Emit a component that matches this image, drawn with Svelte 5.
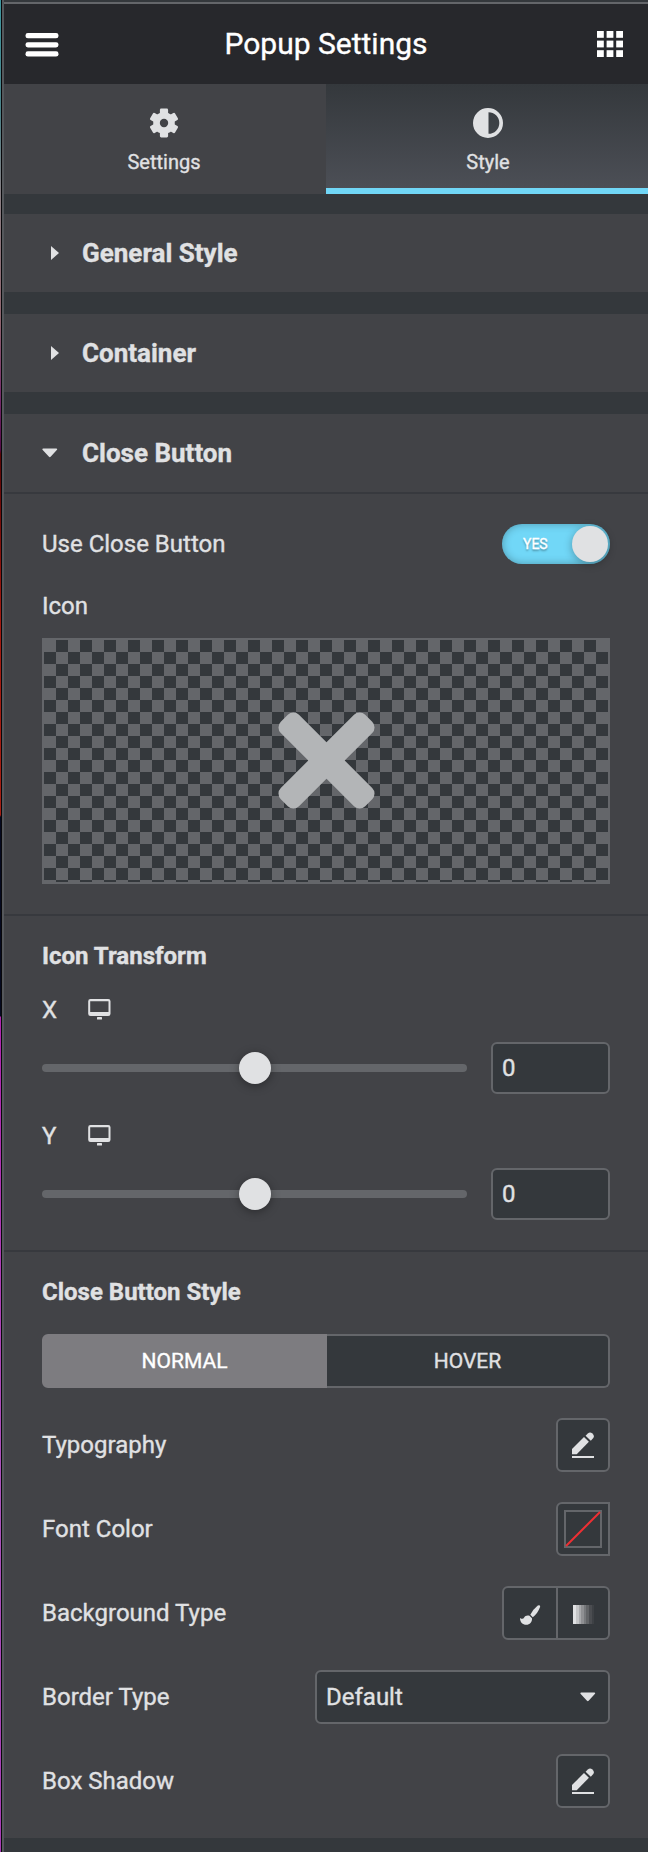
<script lang="ts">
  let activeTab = $state('style');
  let buttonState = $state('normal');
  let useClose = $state(true);

  const axes = [
    { name: 'X', value: 0 },
    { name: 'Y', value: 0 },
  ];
  const bars = [0, 9.2, 18.3];
  const dots = [0, 9.6, 19.2];
  const teeth = [0, 60, 120];

  // slider range is -100..100
  function percent(value: number) {
    return (value + 100) / 2;
  }
</script>

{#snippet pencil()}
  <svg width="22" height="26" viewBox="0 0 22 26" fill="currentColor">
    <path d="M0 17 12 5.1 16.9 9.8 4.7 22.3H0Z" />
    <path d="M13.6 3.8 15.8 1.5Q18 -.4 20.4 1.5 22.9 4 21.3 6L18.8 8.7Z" />
    <path d="M0 24h22v2H0z" />
  </svg>
{/snippet}

{#snippet caretDown()}
  <svg width="16" height="10" viewBox="0 0 16 10" fill="currentColor">
    <path d="M1.3 .6H14.2Q15.9 .8 14.8 2L8.6 8.8Q7.8 9.6 7 8.8L.7 2Q-.3 .8 1.3 .6Z" />
  </svg>
{/snippet}

<div class="frame">
  <div class="page-edge"></div>
  <div class="panel">
    <header>
      <svg width="34" height="24" viewBox="0 0 34 24" fill="currentColor">
        {#each bars as y (y)}
          <rect x=".5" {y} width="33" height="5.3" rx="2.4" />
        {/each}
      </svg>
      <h1>Popup Settings</h1>
      <svg width="26" height="26" viewBox="0 0 26 26" fill="currentColor">
        {#each dots as y (y)}
          {#each dots as x (x)}
            <rect {x} {y} width="6.8" height="6.8" />
          {/each}
        {/each}
      </svg>
    </header>

    <nav>
      <button class="tab" class:active={activeTab === 'settings'} onclick={() => (activeTab = 'settings')}>
        <svg width="30" height="30" viewBox="-15 -15 30 30" fill="currentColor">
          <circle r="10.8" />
          {#each teeth as angle (angle)}
            <rect x="-4.1" y="-14.4" width="8.2" height="28.8" rx="1.3" transform="rotate({angle})" />
          {/each}
          <circle class="hole" r="4.2" />
        </svg>
        <span>Settings</span>
      </button>
      <button class="tab" class:active={activeTab === 'style'} onclick={() => (activeTab = 'style')}>
        <svg width="30" height="30" viewBox="-15 -15 30 30" fill="currentColor">
          <path fill-rule="evenodd" d="M0-15a15 15 0 1 1 0 30a15 15 0 1 1 0-30ZM.5-10.8V10.8a10.8 10.8 0 0 0 0-21.6Z" />
        </svg>
        <span>Style</span>
      </button>
    </nav>

    <section class="closed">
      <h2>
        <svg class="caret-right" width="8" height="14" viewBox="0 0 8 14" fill="currentColor"><path d="M0 0 8 7 0 14Z" /></svg>
        General Style
      </h2>
    </section>
    <section class="closed">
      <h2>
        <svg class="caret-right" width="8" height="14" viewBox="0 0 8 14" fill="currentColor"><path d="M0 0 8 7 0 14Z" /></svg>
        Container
      </h2>
    </section>

    <section class="open">
      <h2>
        {@render caretDown()}
        Close Button
      </h2>

      <div class="group close-group">
        <div class="row toggle-row">
          <span>Use Close Button</span>
          <button class="switch" class:on={useClose} aria-label="Use Close Button" onclick={() => (useClose = !useClose)}>
            <span class="switch-text">YES</span>
            <span class="knob"></span>
          </button>
        </div>
        <div class="icon-label">Icon</div>
        <div class="preview">
          <svg width="97" height="97" viewBox="-49 -49 98 98" fill="currentColor">
            <path
              transform="rotate(45)"
              d="M-13-13V-52.3a8 8 0 0 1 8-8H5a8 8 0 0 1 8 8V-13H52.3a8 8 0 0 1 8 8V5a8 8 0 0 1-8 8H13V52.3a8 8 0 0 1-8 8H-5a8 8 0 0 1-8-8V13H-52.3a8 8 0 0 1-8-8V-5a8 8 0 0 1 8-8Z"
            />
          </svg>
        </div>
      </div>

      <div class="group transform-group">
        <h3>Icon Transform</h3>
        {#each axes as axis (axis.name)}
          <div class="axis">
            <div class="axis-label">
              <span class="axis-name">{axis.name}</span>
              <svg width="23" height="21" viewBox="0 0 23 21" fill="currentColor">
                <path fill-rule="evenodd" d="M2.5 0h17.7q2.3 0 2.3 2.3v12.4q0 2.3-2.3 2.3H2.5Q.2 17 .2 14.7V2.3Q.2 0 2.5 0ZM2.2 2.3V13h18.3V2.3Z" />
                <rect x="9" y="18" width="5" height="2.5" rx=".5" />
              </svg>
            </div>
            <div class="slider-row">
              <div class="track">
                <div class="handle" style="left: {percent(axis.value)}%"></div>
              </div>
              <div class="number">{axis.value}</div>
            </div>
          </div>
        {/each}
      </div>

      <div class="group style-group">
        <h3>Close Button Style</h3>
        <div class="states">
          <button class:selected={buttonState === 'normal'} onclick={() => (buttonState = 'normal')}>NORMAL</button>
          <button class:selected={buttonState === 'hover'} onclick={() => (buttonState = 'hover')}>HOVER</button>
        </div>
        <div class="row">
          <span>Typography</span>
          <div class="box">{@render pencil()}</div>
        </div>
        <div class="row">
          <span>Font Color</span>
          <div class="box color">
            <svg width="38" height="38" viewBox="0 0 38 38" fill="none" stroke-width="2">
              <rect class="swatch" x="1" y="1" width="36" height="36" />
              <path class="slash" d="M2 36 36 2" />
            </svg>
          </div>
        </div>
        <div class="row">
          <span>Background Type</span>
          <div class="choices">
            <div class="choice">
              <svg width="21" height="20" viewBox="0 0 21 20" fill="currentColor">
                <path d="M17.8 .4Q20.4 -.5 20.1 2 17.5 8.8 12.8 12.2L10.3 9.8Q12.6 4.5 17.8 .4Z" />
                <path d="M9.5 10.7 12 13.2C12.3 17.2 9.7 19.7 6.4 19.7 2.5 19.7 0 17 0 12.9 1.7 14.2 3.4 14.2 4 12.8 5 10.6 7.3 9.9 9.5 10.7Z" />
              </svg>
            </div>
            <div class="choice"><div class="gradient"></div></div>
          </div>
        </div>
        <div class="row">
          <span>Border Type</span>
          <div class="select">
            <span>Default</span>
            {@render caretDown()}
          </div>
        </div>
        <div class="row">
          <span>Box Shadow</span>
          <div class="box">{@render pencil()}</div>
        </div>
      </div>
    </section>
  </div>
</div>

<style>
  :global(body) {
    background: #34383c;
  }

  .frame {
    display: flex;
    width: 648px;
    height: 1852px;
    overflow: hidden;
    font-family: Roboto, 'Liberation Sans', sans-serif;
    font-size: 24px;
    color: #e0e1e3;
    -webkit-text-stroke: 0.35px currentColor;
  }

  .frame * {
    box-sizing: border-box;
  }

  .page-edge {
    width: 2px;
    border-right: 1px solid #08080b;
    background: linear-gradient(#3e98a0 0, #4b8389 110px, #8b7f83 200px, #90666f 320px, #74296b 400px, #530b48 450px, #5a0606 454px, #a31b12 620px, #a52014 815px, #050a20 817px, #050a20 1016px, #b025ae 1017px, #ab55bb 1500px, #a73bb4 1852px);
  }

  .panel {
    flex: 1;
    border-left: 2px solid #55585c;
    background: #34383c;
  }

  svg {
    display: block;
    flex-shrink: 0;
  }

  button {
    margin: 0;
    padding: 0;
    border: 0;
    font-family: inherit;
    color: inherit;
    cursor: pointer;
  }

  header {
    display: flex;
    align-items: center;
    justify-content: space-between;
    height: 84px;
    padding: 4px 25px 0 21px;
    background: linear-gradient(#34383c 2px, #64666a 2px, #64666a 4px, #27282c 4px);
    color: #fff;
  }

  header svg:first-child {
    margin-top: 2px;
  }

  h1 {
    margin: 0 4px 2px 0;
    font-size: 30px;
    font-weight: 400;
  }

  nav {
    display: grid;
    grid-template-columns: 1fr 1fr;
    height: 110px;
  }

  .tab {
    display: flex;
    flex-direction: column;
    align-items: center;
    gap: 12px;
    padding: 24px 2px 0 0;
    background: #424347;
    font-size: 20px;
    line-height: 24px;
  }

  .tab.active {
    padding: 24px 0 0 2px;
    border-bottom: 6px solid #71d7f7;
    background: linear-gradient(#34383c, #4c4f56);
  }

  .hole {
    fill: #424347;
  }

  section {
    background: #424347;
  }

  .closed {
    margin-top: 22px;
  }

  nav + .closed {
    margin-top: 20px;
  }

  .open {
    margin-top: 22px;
  }

  h2 {
    display: flex;
    align-items: center;
    gap: 24px;
    height: 78px;
    margin: 0;
    padding-left: 38px;
    font-size: 26px;
    font-weight: 700;
  }

  .caret-right {
    margin: 0 -1px 0 9px;
  }

  h3 {
    margin: 0;
    font-size: 24px;
    font-weight: 700;
    line-height: 28px;
  }

  .group {
    padding: 0 38px;
    border-top: 2px solid #37393e;
  }

  .row {
    display: flex;
    align-items: center;
    justify-content: space-between;
    height: 54px;
    margin-top: 30px;
  }

  .close-group {
    height: 422px;
  }

  .toggle-row {
    height: 40px;
  }

  .switch {
    display: flex;
    align-items: center;
    justify-content: space-between;
    width: 108px;
    height: 40px;
    padding: 2px 2px 2px 21px;
    border-radius: 20px;
    background: #64666a;
    box-shadow: inset 0 0 9px rgba(0, 0, 0, 0.3);
  }

  .switch.on {
    background: #71d7f7;
  }

  .switch-text {
    font-size: 14px;
    font-weight: 400;
    color: #fff;
    text-shadow: 0 2px 2px rgba(0, 0, 0, 0.35);
  }

  .knob {
    width: 36px;
    height: 36px;
    border-radius: 50%;
    background: #e0e1e3;
    box-shadow: 0 2px 8px rgba(0, 0, 0, 0.3);
  }

  .icon-label {
    margin-top: 28px;
    line-height: 28px;
  }

  .preview {
    display: flex;
    align-items: center;
    justify-content: center;
    height: 246px;
    margin-top: 18px;
    padding: 0 0 1px 1px;
    border: 2px solid #64666a;
    background: repeating-conic-gradient(#34383c 0 25%, #64666a 0 50%) 0 0 / 24px 24px;
    color: #b3b5b7;
  }

  .transform-group {
    height: 336px;
    padding-top: 26px;
  }

  .axis {
    height: 126px;
    padding-top: 26px;
  }

  .axis-label {
    display: flex;
    align-items: center;
    height: 28px;
    line-height: 28px;
  }

  .axis-name {
    width: 46px;
  }

  .axis-label svg {
    margin-bottom: 2px;
  }

  .slider-row {
    display: flex;
    align-items: center;
    gap: 24px;
    margin-top: 18px;
  }

  .track {
    position: relative;
    flex: 1;
    height: 8px;
    border-radius: 4px;
    background: #64666a;
  }

  .handle {
    position: absolute;
    top: -12px;
    width: 32px;
    height: 32px;
    margin-left: -16px;
    border-radius: 50%;
    background: #e0e1e3;
    box-shadow: 0 2px 10px rgba(0, 0, 0, 0.35);
  }

  .number {
    width: 119px;
    height: 52px;
    padding-left: 9px;
    border: 2px solid #64666a;
    border-radius: 6px;
    background: #34383c;
    line-height: 48px;
  }

  .style-group {
    height: 588px;
    padding-top: 26px;
  }

  .states {
    display: grid;
    grid-template-columns: 285px 1fr;
    height: 54px;
    margin-top: 28px;
  }

  .states button {
    border: 2px solid #64666a;
    border-left: 0;
    border-radius: 0 6px 6px 0;
    background: #34383c;
    font-size: 21px;
  }

  .states button:first-child {
    border-left: 2px solid #64666a;
    border-radius: 6px 0 0 6px;
  }

  .states button.selected {
    border-color: #7d7c80;
    background: #7d7c80;
    color: #fff;
  }

  .box,
  .choice {
    display: flex;
    align-items: center;
    justify-content: center;
    width: 54px;
    height: 54px;
    border: 2px solid #64666a;
    border-radius: 6px;
    background: #34383c;
  }

  .box.color {
    border-radius: 6px 0 0 6px;
  }

  .swatch {
    stroke: #64666a;
  }

  .slash {
    stroke: #ee2f33;
  }

  .choices {
    display: flex;
  }

  .choice {
    padding-top: 3px;
  }

  .choice:first-child {
    width: 56px;
    border-radius: 6px 0 0 6px;
  }

  .choice:last-child {
    width: 52px;
    border-left: 0;
    border-radius: 0 6px 6px 0;
  }

  .gradient {
    width: 21px;
    height: 19px;
    margin-left: 1px;
    background: linear-gradient(90deg, #e0e1e3 3px, #c5c6c8 3px 6px, #a9aaad 6px 8px, #8f9093 8px 11px, #77797c 11px 13px, #626467 13px 16px, #4b4d51 16px 19px, #3e4145 19px);
  }

  .select {
    display: flex;
    align-items: center;
    justify-content: space-between;
    width: 295px;
    height: 54px;
    padding: 0 12px 0 9px;
    border: 2px solid #64666a;
    border-radius: 6px;
    background: #34383c;
  }
</style>
